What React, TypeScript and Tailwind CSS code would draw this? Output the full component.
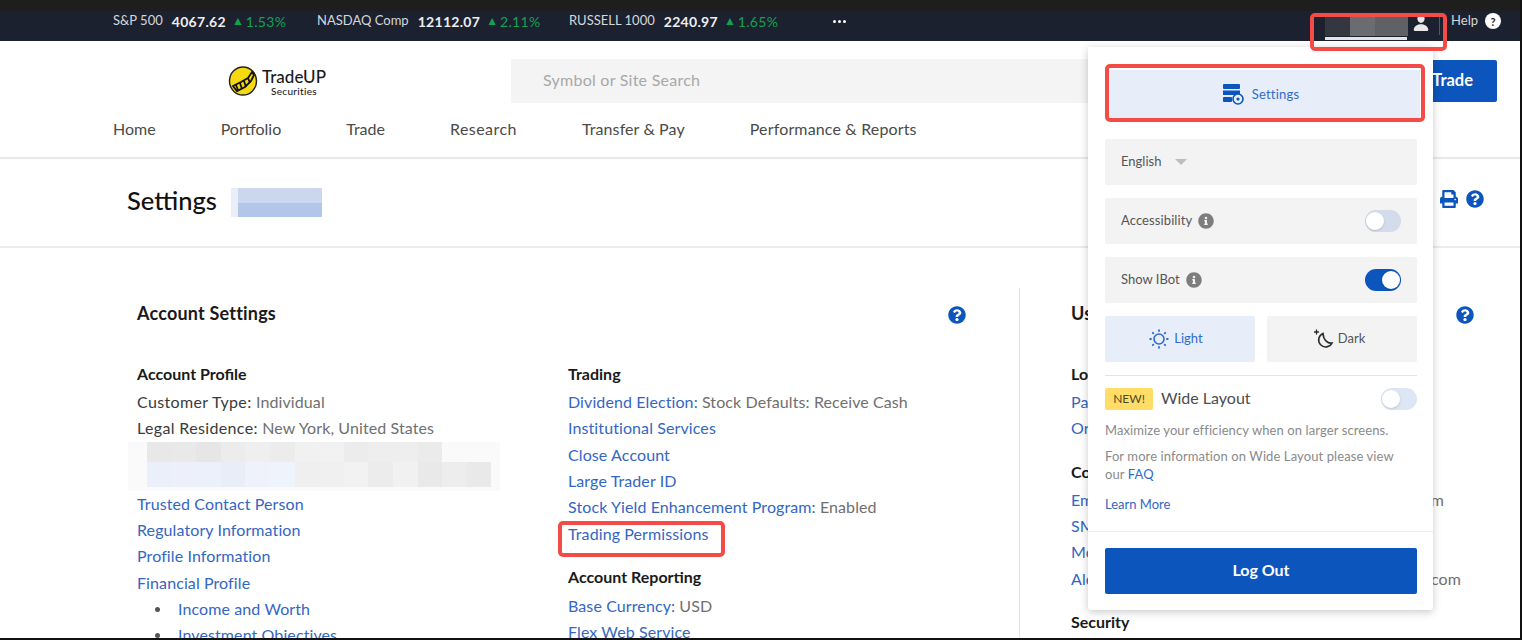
import React from 'react';
import { FaPrint, FaQuestionCircle, FaInfoCircle } from 'react-icons/fa';
import { IoPerson } from 'react-icons/io5';

const TICKERS = [
  { name: 'S&P 500', value: '4067.62', change: '1.53%', w: 'w-[204px]' },
  { name: 'NASDAQ Comp', value: '12112.07', change: '2.11%', w: 'w-[252px]' },
  { name: 'RUSSELL 1000', value: '2240.97', change: '1.65%', w: 'w-[252px]' },
];

const NAV = [
  { label: 'Home', cls: '' },
  { label: 'Portfolio', cls: '' },
  { label: 'Trade', cls: '' },
  { label: 'Research', cls: 'tracking-[0.45px]' },
  { label: 'Transfer & Pay', cls: 'tracking-[0.1px]' },
  { label: 'Performance & Reports', cls: 'tracking-[0.15px]' },
];

const BLUR_TOP = ['#e8e8e8', '#e9e9e9', '#e6e6e6', '#ececec', '#efefef', '#ececec', '#f1f1f1', '#f2f2f2', '#ececec', '#eeeeee', '#eeeeee', '#ebebeb'];
const BLUR_BOTTOM = ['#ebeffa', '#edf0fa', '#ecf0fa', '#e9edf8', '#eff2fb', '#eff3fb', '#efefef', '#f0f0f0', '#f2f2f2', '#ececec', '#f1f1f1', '#e9e9e9', '#ededed', '#e9e9e9'];

function Row({ children, className = '' }: { children: React.ReactNode; className?: string }) {
  return <div className={`flex h-[26.33px] items-center whitespace-nowrap text-[16px] tracking-[0.1px] ${className}`}>{children}</div>;
}

function Heading({ children, className = '' }: { children: React.ReactNode; className?: string }) {
  return <div className={`flex h-[28px] items-center whitespace-nowrap pb-[2px] text-[16px] font-bold text-[#1a1a1a] ${className}`}>{children}</div>;
}

function A({ children }: { children: React.ReactNode }) {
  return <span className="text-[#3466c4]">{children}</span>;
}

function Muted({ children }: { children: React.ReactNode }) {
  return <span className="text-[#6f6f6f]">{children}</span>;
}

function Dark({ children }: { children: React.ReactNode }) {
  return <span className="tracking-[0.35px] text-[#3a3a3a]">{children}</span>;
}

function Toggle({ on = false, light = false }: { on?: boolean; light?: boolean }) {
  return (
    <div className={`flex h-[22px] w-[36px] items-center rounded-full px-[1px] ${on ? 'justify-end bg-[#0b55bc]' : light ? 'bg-[#dde6f4]' : 'bg-[#d3dcea]'}`}>
      <div className="h-[18px] w-[18px] rounded-full bg-white shadow-sm" />
    </div>
  );
}

function Logo() {
  return (
    <svg width="30" height="30" viewBox="0 0 30 30">
      <ellipse cx="15" cy="15" rx="13.5" ry="14" fill="#f7d90f" stroke="#222" strokeWidth="1.4" />
      <path d="M5 20 L13 16 L20 12 L24 6 L26 9 L23 15 L17 21 L9 25 Z" fill="#f7d90f" stroke="#111" strokeWidth="1.8" />
      <path d="M8 19 L10 24 M12 17 L14 23 M16 15 L18 21 M20 12 L22 17" stroke="#111" strokeWidth="1.8" />
    </svg>
  );
}

function SettingsIcon() {
  return (
    <svg width="21" height="21" viewBox="0 0 21 21" fill="#0b55bc">
      <rect x="0" y="0" width="17" height="5" rx="1" />
      <rect x="0" y="6.5" width="17" height="4.5" />
      <rect x="0" y="13" width="9" height="5" rx="1" />
      <circle cx="15" cy="15" r="5" fill="#e7eef9" stroke="#0b55bc" strokeWidth="1.6" />
      <circle cx="15" cy="15" r="1.6" />
    </svg>
  );
}

function SunIcon() {
  return (
    <svg width="20" height="20" viewBox="0 0 20 20" fill="none" stroke="#2f6bd0">
      <circle cx="10" cy="10" r="5" strokeWidth="1.6" />
      <g strokeWidth="1.8" strokeLinecap="round">
        <path d="M10 1.2v.8M10 18v.8M1.2 10H2M18 10h.8M3.8 3.8l.5.5M15.7 15.7l.5.5M3.8 16.2l.5-.5M15.7 4.3l.5-.5" />
      </g>
    </svg>
  );
}

function MoonIcon() {
  return (
    <svg width="20" height="20" viewBox="0 0 20 20" fill="none" stroke="#2b2b2b" strokeWidth="1.6" strokeLinecap="round">
      <path d="M9 4.5a7 7 0 1 0 9 9.5c-4 .8-8.5-2.5-9-9.5Z" />
      <path d="M2.5 1v4M.5 3h4" strokeWidth="1.3" />
    </svg>
  );
}

function Popover() {
  return (
    <div className="absolute left-[1088px] top-[47px] h-[563px] w-[345px] rounded-b-[3px] bg-white shadow-[0_2px_8px_rgba(0,0,0,0.22)]">
      <div className="pl-[17px] pr-[16px] pt-[23px]">
        <div className="flex h-[48px] w-[315px] items-center justify-center gap-[8px] bg-[#e7eef9] pr-[3px] pt-[1px] text-[13px] tracking-[0.2px] text-[#2f6bd0]">
          <SettingsIcon />
          <span>Settings</span>
        </div>
        <div className="mt-[21px] flex h-[46px] items-center rounded-[2px] bg-[#f3f3f3] px-[16px] text-[13px] text-[#555]">
          English
          <span className="ml-[14px] h-0 w-0 border-x-[6px] border-t-[6px] border-x-transparent border-t-[#bdbdbd]" />
        </div>
        <div className="mt-[13px] flex h-[46px] items-center justify-between rounded-[2px] bg-[#f3f3f3] px-[16px] text-[13px] tracking-[0.1px] text-[#555]">
          <span className="flex items-center gap-[6px]">Accessibility <FaInfoCircle className="text-[16px] text-[#7d7d7d]" /></span>
          <Toggle />
        </div>
        <div className="mt-[13px] flex h-[46px] items-center justify-between rounded-[2px] bg-[#f3f3f3] px-[16px] text-[13px] text-[#555]">
          <span className="flex items-center gap-[6px]">Show IBot <FaInfoCircle className="text-[16px] text-[#7d7d7d]" /></span>
          <Toggle on />
        </div>
        <div className="mt-[13px] grid grid-cols-2 gap-[12px]">
          <div className="flex h-[46px] items-center justify-center gap-[5px] rounded-[2px] bg-[#e7eef9] pr-[8px] text-[13px] text-[#2f6bd0]">
            <SunIcon /> Light
          </div>
          <div className="flex h-[46px] items-center justify-center gap-[4px] rounded-[2px] bg-[#f3f3f3] pr-[5px] text-[13px] text-[#555]">
            <MoonIcon /> Dark
          </div>
        </div>
        <div className="mt-[13px] border-t border-[#e4e4e4]" />
        <div className="mt-[11px] flex h-[23px] items-center justify-between">
          <div className="flex items-center gap-[8px]">
            <span className="flex h-[22px] w-[48px] items-center justify-center rounded-[2px] bg-[#ffdd66] text-[12px] text-[#4a4a2a]">NEW!</span>
            <span className="pb-[1px] text-[16px] text-[#4d4d4d]">Wide Layout</span>
          </div>
          <Toggle light />
        </div>
        <p className="mt-[11px] whitespace-nowrap text-[13px] leading-[18px] tracking-[0.1px] text-[#8a8a8a]">Maximize your efficiency when on larger screens.</p>
        <p className="mt-[8px] whitespace-nowrap text-[13px] leading-[18px] tracking-[0.1px] text-[#8a8a8a]">
          For more information on Wide Layout please view<br />our <span className="text-[#2f6bd0]">FAQ</span>
        </p>
        <p className="mt-[12px] text-[13px] leading-[18px] text-[#3466c4]">Learn More</p>
      </div>
      <div className="mt-[18px] border-t border-[#ececec]" />
      <div className="pl-[17px] pr-[16px] pt-[16px]">
        <div className="flex h-[46px] items-center justify-center rounded-[2px] bg-[#0b55bc] pb-[3px] text-[16px] font-bold text-white">Log Out</div>
      </div>
    </div>
  );
}

export default function App() {
  return (
    <div className="relative h-[640px] w-[1522px] overflow-hidden border-b-2 border-r-2 border-b-[#111] border-r-[#111] bg-white font-['Lato','Liberation_Sans',sans-serif]">
      {/* ticker bar */}
      <div className="h-[11px] bg-[#1e1e1e]" />
      <div className="flex h-[30px] items-start bg-[#1c2130] pl-[113px] text-[13px] text-[#d5d7db]">
        <div className="flex h-[20px] items-center">
          {TICKERS.map(t => (
            <div key={t.name} className={`flex items-center whitespace-nowrap ${t.w}`}>
              <span>{t.name}</span>
              <span className="ml-[9px] text-[14px] font-bold tabular-nums tracking-[0.3px] text-[#eeeeee]">{t.value}</span>
              <span className="ml-[6px] text-[12px] text-[#12a150]">▲</span>
              <span className="ml-[2px] text-[14px] tabular-nums tracking-[0.3px] text-[#12a150]">{t.change}</span>
            </div>
          ))}
          <span className="ml-[12px] flex gap-[2px]">
            <i className="h-[3px] w-[3px] rounded-full bg-white" />
            <i className="h-[3px] w-[3px] rounded-full bg-white" />
            <i className="h-[3px] w-[3px] rounded-full bg-white" />
          </span>
        </div>
        <div className="ml-auto mr-[19px] flex h-[20px] items-center gap-[7px]">
          <span>Help</span>
          <span className="flex h-[16px] w-[16px] items-center justify-center rounded-full bg-white text-[11px] font-bold leading-none text-[#1c2130]">?</span>
        </div>
      </div>

      {/* header */}
      <div className="h-[118px] border-b-2 border-[#e9e9e9]">
        <div className="flex items-start pl-[228px] pt-[18px]">
          <div className="flex w-[283px] items-center pt-[6px]">
            <Logo />
            <div className="ml-[4px] flex flex-col items-center pt-[3px] text-[#1a1a1a]">
              <span className="text-[17px] font-medium leading-[18px]">TradeUP</span>
              <span className="text-[10px] font-medium leading-[10px] tracking-[0.3px]">Securities</span>
            </div>
          </div>
          <div className="flex h-[44px] w-[700px] items-center bg-[#f4f4f4] pb-[2px] pl-[32px] text-[16px] tracking-[0.25px] text-[#a8a8a8]">Symbol or Site Search</div>
          <div className="ml-auto mr-[23px] mt-[1px] flex h-[42px] w-[100px] items-center justify-end rounded-[2px] bg-[#0b55bc] pb-[2px] pr-[24px] text-[16.5px] font-bold text-white">Trade</div>
        </div>
        <div className="mt-[14px] flex gap-[65px] pl-[113px] text-[16px] text-[#4a4a4a]">
          {NAV.map(n => <span key={n.label} className={n.cls}>{n.label}</span>)}
        </div>
      </div>

      {/* page title */}
      <div className="flex h-[89px] items-center justify-between border-b-2 border-[#ececec] pl-[127px] pr-[36px]">
        <div className="flex items-center">
          <span className="pb-[4px] text-[25.5px] font-medium text-[#111]">Settings</span>
          <div className="ml-[14px] flex h-[29px] w-[91px] bg-[#e9eef8]">
            <div className="ml-[7px] flex w-[84px] flex-col">
              <div className="flex-1 bg-[#cbd7ef]" />
              <div className="flex-1 bg-[#b1c6e9]" />
            </div>
          </div>
        </div>
        <div className="mb-[7px] flex items-center gap-[8px] text-[18px] text-[#0b55bc]">
          <FaPrint />
          <FaQuestionCircle />
        </div>
      </div>

      {/* settings columns */}
      <div className="mt-[40px] flex pl-[137px]">
        <div className="w-[883px] border-r border-[#e4e4e4]">
          <div className="flex h-[50px] w-[830px] items-center justify-between">
            <span className="text-[18px] font-bold tracking-[0.2px] text-[#1a1a1a]">Account Settings</span>
            <FaQuestionCircle className="mr-[1px] mt-[3px] text-[18px] text-[#0b55bc]" />
          </div>
          <div className="mt-[23px] flex">
            <div className="w-[431px]">
              <Heading>Account Profile</Heading>
              <Row><Dark>Customer Type:&nbsp;</Dark><Muted>Individual</Muted></Row>
              <Row><Dark>Legal Residence:&nbsp;</Dark><Muted>New York, United States</Muted></Row>
              <div className="ml-[-9px] h-[49px] w-[372px] bg-[#fafafa]">
                <div className="flex h-[20px] pl-[19px]">
                  {BLUR_TOP.map((c, i) => <div key={i} className="h-full w-[24.6px]" style={{ background: c }} />)}
                </div>
                <div className="flex h-[25px] pl-[19px]">
                  {BLUR_BOTTOM.map((c, i) => <div key={i} className="h-full w-[24.6px]" style={{ background: c }} />)}
                </div>
              </div>
              <Row><A>Trusted Contact Person</A></Row>
              <Row><A>Regulatory Information</A></Row>
              <Row><A>Profile Information</A></Row>
              <Row><A>Financial Profile</A></Row>
              <Row className="pl-[18px]"><span className="mr-[18px] h-[5px] w-[5px] rounded-full bg-[#555]" /><A>Income and Worth</A></Row>
              <Row className="pl-[18px]"><span className="mr-[18px] h-[5px] w-[5px] rounded-full bg-[#555]" /><A>Investment Objectives</A></Row>
            </div>
            <div>
              <Heading>Trading</Heading>
              <Row><A>Dividend Election:</A>&nbsp;<Muted>Stock Defaults: Receive Cash</Muted></Row>
              <Row><A>Institutional Services</A></Row>
              <Row><A>Close Account</A></Row>
              <Row><A>Large Trader ID</A></Row>
              <Row><A>Stock Yield Enhancement Program:</A>&nbsp;<Muted>Enabled</Muted></Row>
              <Row><A>Trading Permissions</A></Row>
              <Heading className="mt-[17px] h-[29px]">Account Reporting</Heading>
              <Row><A>Base Currency:</A>&nbsp;<Muted>USD</Muted></Row>
              <Row><A>Flex Web Service</A></Row>
            </div>
          </div>
        </div>
        <div className="pl-[51px]">
          <div className="flex h-[50px] w-[403px] items-center justify-between">
            <span className="text-[18px] font-bold tracking-[0.2px] text-[#1a1a1a]">User Settings</span>
            <FaQuestionCircle className="mt-[3px] text-[18px] text-[#0b55bc]" />
          </div>
          <div className="mt-[23px]">
            <Heading>Login Settings</Heading>
            <Row><A>Password</A></Row>
            <Row><A>Order Presets</A></Row>
            <Heading className="mt-[17px]">Communication</Heading>
            <Row className="w-[373px] justify-between"><A>Email</A><Muted>m</Muted></Row>
            <Row><A>SMS</A></Row>
            <Row><A>Mobile</A></Row>
            <Row className="w-[390px] justify-between"><A>Alerts</A><Muted>.com</Muted></Row>
            <Heading className="mt-[17px]">Security</Heading>
          </div>
        </div>
      </div>

      <Popover />

      {/* redacted user name in the ticker bar */}
      <div className="absolute left-[1325px] top-[15px] flex h-[21px] w-[83px]">
        <div className="w-[25px] bg-[#34373f]" />
        <div className="w-[25px] bg-[#6a6c70]" />
        <div className="w-[33px] bg-[#5f6165]" />
      </div>
      <div className="absolute left-[1325px] top-[37px] h-[3px] w-[82px] bg-[#e4e4e4]" />
      <IoPerson className="absolute left-[1412px] top-[14px] text-[18px] text-[#e8e8e8]" />
      <div className="absolute left-[1439px] top-[16px] h-[19px] w-px bg-[#55585f]" />

      {/* red annotation boxes */}
      <div className="absolute left-[1310px] top-[13px] h-[38px] w-[137px] rounded-[5px] border-[4px] border-[#f44b47]" />
      <div className="absolute left-[1105px] top-[64px] h-[58px] w-[320px] rounded-[5px] border-[4px] border-[#f44b47]" />
      <div className="absolute left-[558px] top-[521px] h-[36px] w-[167px] rounded-[5px] border-[4px] border-[#f44b47]" />
    </div>
  );
}
